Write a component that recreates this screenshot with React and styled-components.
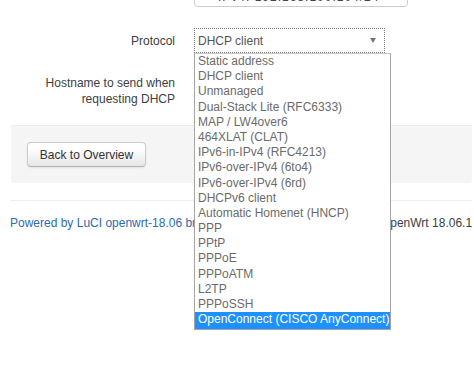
import React from 'react';
import styled, { createGlobalStyle } from 'styled-components';

const Global = createGlobalStyle`
  html {
    overflow: hidden;
  }
  body {
    margin: 0;
    padding: 0;
    background: #fff;
    font-family: 'Liberation Sans', Arial, sans-serif;
    font-size: 12px;
    color: #404040;
  }
  #root {
    min-height: 100vh;
  }
`;

const Page = styled.div`
  min-height: 100vh;
  box-sizing: border-box;
  padding: 0 2px 0 11px;
`;

const Form = styled.div`
  display: flex;
  flex-direction: column;
`;

const Row = styled.div`
  display: grid;
  grid-template-columns: 164px 1fr;
  column-gap: 19px;
  align-items: center;
  margin-top: ${(p) => p.$top || 0}px;
`;

const Label = styled.div`
  text-align: right;
  line-height: 16px;
  color: #404040;
`;

const TopBox = styled.div`
  width: 214px;
  height: 28px;
  border: 1px solid #ccc;
  border-radius: 4px;
  box-shadow: inset 0 1px 2px rgba(0, 0, 0, 0.05);
  padding: 9px 0 0 23px;
  box-sizing: border-box;
  line-height: 16px;
  font-size: 12px;
  color: #444;
  letter-spacing: 1px;
  overflow: hidden;
`;

const SelectWrap = styled.div`
  position: relative;
  width: 191px;
`;

const Select = styled.div`
  height: 25px;
  box-sizing: border-box;
  border: 1px dotted #7a7a7a;
  display: flex;
  align-items: center;
  justify-content: space-between;
  padding: 0 8px 0 3px;
  color: #555;
  background: #fff;
`;

const Arrow = styled.span`
  width: 0;
  height: 0;
  border-left: 3px solid transparent;
  border-right: 3px solid transparent;
  border-top: 5px solid #777;
`;

const List = styled.ul`
  position: absolute;
  top: 100%;
  left: 0;
  width: 197px;
  box-sizing: border-box;
  margin: 0;
  padding: 0;
  list-style: none;
  background: #fff;
  border: 1px solid #a5a5a5;
  border-top-color: #c9c9c9;
  z-index: 5;
`;

const Item = styled.li`
  line-height: 15.2px;
  height: 15.2px;
  padding-left: 3px;
  white-space: nowrap;
  color: ${(p) => (p.$active ? '#fff' : '#6b6b6b')};
  background: ${(p) => (p.$active ? '#1e90ff' : 'transparent')};
  &:last-child {
    height: 16.5px;
  }
`;

const Actions = styled.div`
  margin-top: 18px;
  background: #f5f5f5;
  border-top: 1px solid #ececec;
  padding: 16px 16px 16px;
  border-radius: 0 0 3px 3px;
`;

const Button = styled.button`
  font-family: inherit;
  font-size: 12px;
  color: #333;
  width: 119px;
  height: 25px;
  border: 1px solid #ccc;
  border-bottom-color: #b3b3b3;
  border-radius: 4px;
  background: linear-gradient(#fff, #fff 25%, #e6e6e6);
  box-shadow: inset 0 1px 0 rgba(255, 255, 255, 0.2), 0 1px 2px rgba(0, 0, 0, 0.08);
  padding: 0;
`;

const Footer = styled.footer`
  margin-top: 17px;
  border-top: 1px solid #eee;
  padding-top: 14px;
  margin-left: -1px;
  white-space: nowrap;
  overflow: hidden;
  line-height: 16px;
  color: #404040;
`;

const Link = styled.a`
  color: #2d6cae;
  text-decoration: none;
`;

const options = [
  'Static address',
  'DHCP client',
  'Unmanaged',
  'Dual-Stack Lite (RFC6333)',
  'MAP / LW4over6',
  '464XLAT (CLAT)',
  'IPv6-in-IPv4 (RFC4213)',
  'IPv6-over-IPv4 (6to4)',
  'IPv6-over-IPv4 (6rd)',
  'DHCPv6 client',
  'Automatic Homenet (HNCP)',
  'PPP',
  'PPtP',
  'PPPoE',
  'PPPoATM',
  'L2TP',
  'PPPoSSH',
  'OpenConnect (CISCO AnyConnect)',
];

export default function App() {
  return (
    <>
      <Global />
      <Page>
        <Form>
          <Row $top={-21}>
            <div />
            <TopBox>IPv4: 192.168.100.104/24</TopBox>
          </Row>
          <Row $top={21}>
            <Label>Protocol</Label>
            <SelectWrap>
              <Select>
                <span>DHCP client</span>
                <Arrow />
              </Select>
              <List>
                {options.map((o, i) => (
                  <Item key={o} $active={i === options.length - 1}>
                    {o}
                  </Item>
                ))}
              </List>
            </SelectWrap>
          </Row>
          <Row $top={22}>
            <Label>
              Hostname to send when
              <br />
              requesting DHCP
            </Label>
            <div />
          </Row>
        </Form>
        <Actions>
          <Button>Back to Overview</Button>
        </Actions>
        <Footer>
          <Link href="#">Powered by LuCI openwrt-18.06 branch (git-18.228.31946-f64b152)</Link>
          {' / OpenWrt 18.06.1'}
        </Footer>
      </Page>
    </>
  );
}
